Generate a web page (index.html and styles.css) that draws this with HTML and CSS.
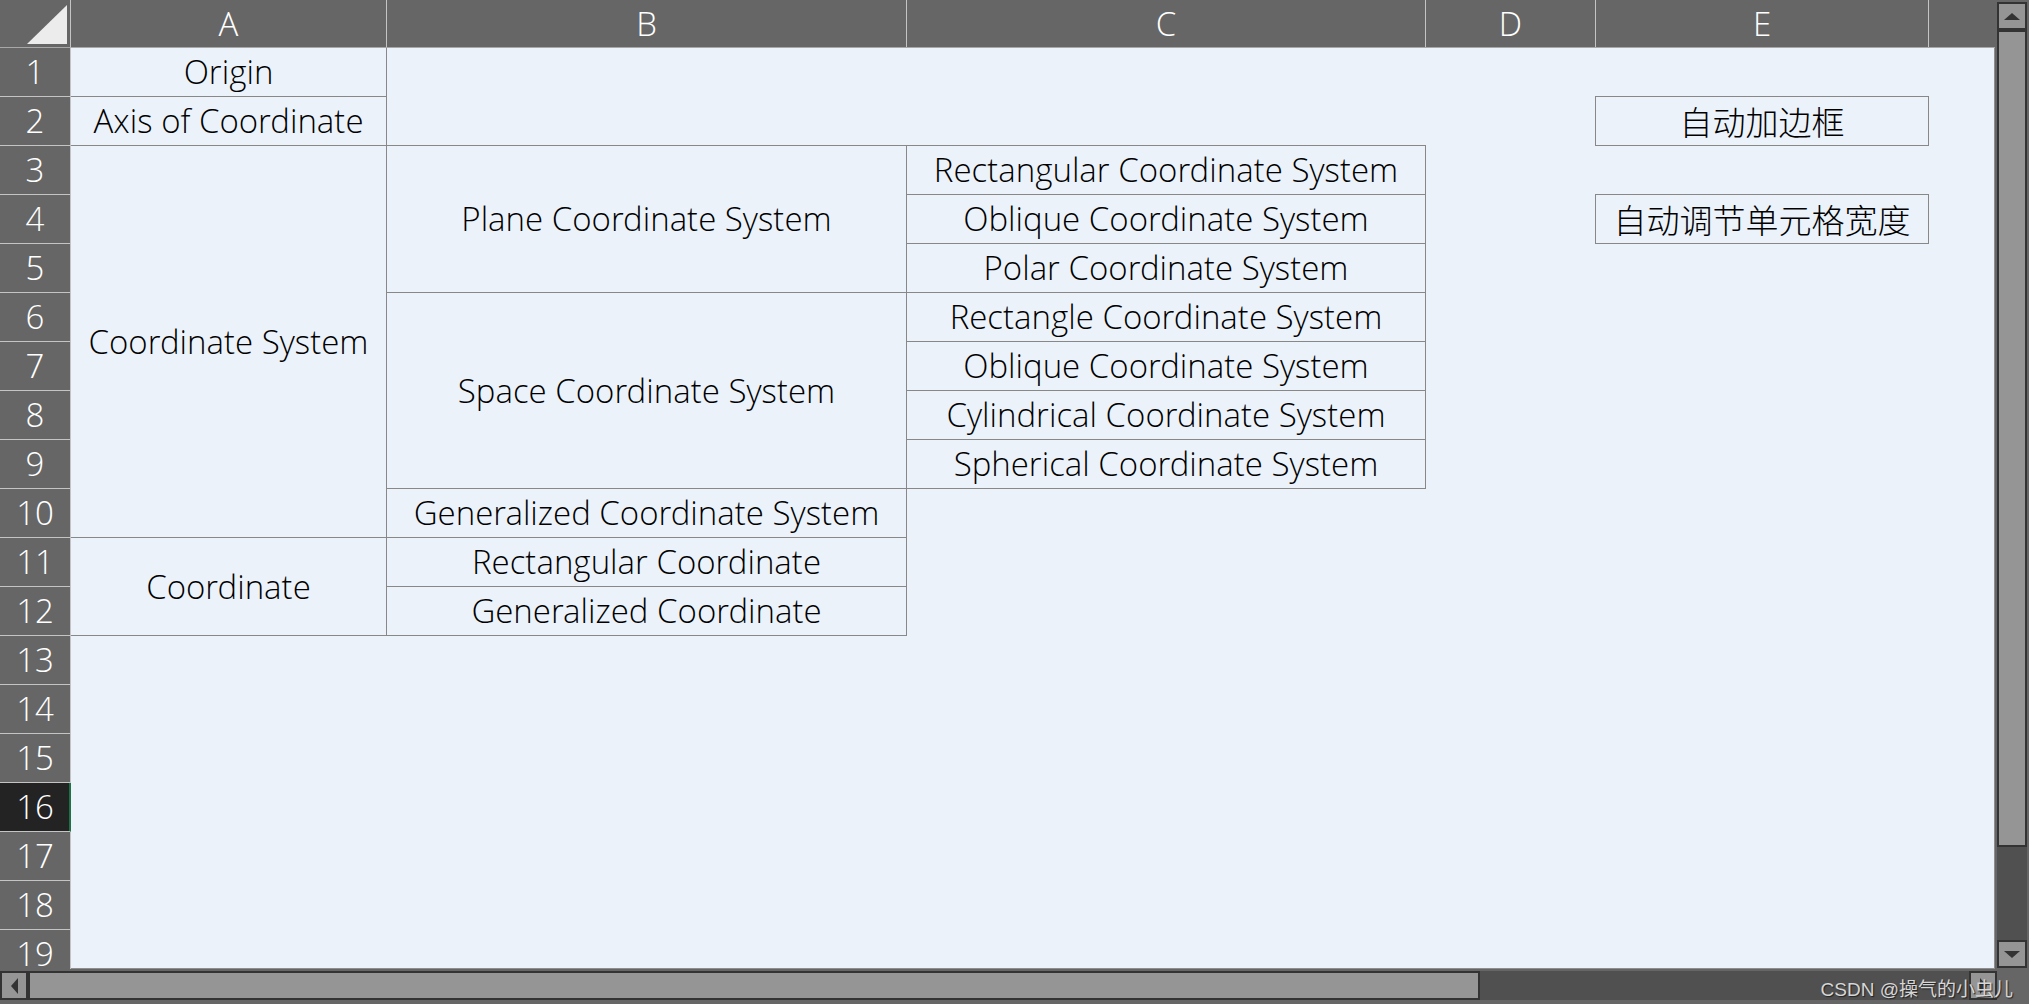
FILE: index.html
```html
<!DOCTYPE html>
<html lang="zh-CN">
<head>
<meta charset="utf-8">
<title>Coordinate System</title>
<link rel="stylesheet" href="styles.css">
</head>
<body>
<div class="window">
  <div class="sheet">
    <div class="corner">
      <svg class="corner-tri" width="71" height="48" viewBox="0 0 71 48"><polygon points="27,44 67,44 67,5" fill="#ececec"/></svg>
    </div>
    <div class="colheads">
      <div class="colhead">A</div>
      <div class="colhead">B</div>
      <div class="colhead">C</div>
      <div class="colhead">D</div>
      <div class="colhead">E</div>
      <div class="colhead last"></div>
    </div>
    <div class="rowheads">
      <div class="rowhead">1</div>
      <div class="rowhead">2</div>
      <div class="rowhead">3</div>
      <div class="rowhead">4</div>
      <div class="rowhead">5</div>
      <div class="rowhead">6</div>
      <div class="rowhead">7</div>
      <div class="rowhead">8</div>
      <div class="rowhead">9</div>
      <div class="rowhead">10</div>
      <div class="rowhead">11</div>
      <div class="rowhead">12</div>
      <div class="rowhead">13</div>
      <div class="rowhead">14</div>
      <div class="rowhead">15</div>
      <div class="rowhead sel">16</div>
      <div class="rowhead">17</div>
      <div class="rowhead">18</div>
      <div class="rowhead">19</div>
    </div>
    <div class="cells">
      <div class="cell bd col-a row-1">Origin</div>
      <div class="cell bd col-a row-2">Axis of Coordinate</div>
      <div class="cell bd col-a row-3 span-8">Coordinate System</div>
      <div class="cell bd col-b row-3 span-3">Plane Coordinate System</div>
      <div class="cell bd col-c row-3">Rectangular Coordinate System</div>
      <div class="cell bd col-c row-4">Oblique Coordinate System</div>
      <div class="cell bd col-c row-5">Polar Coordinate System</div>
      <div class="cell bd col-b row-6 span-4">Space Coordinate System</div>
      <div class="cell bd col-c row-6">Rectangle Coordinate System</div>
      <div class="cell bd col-c row-7">Oblique Coordinate System</div>
      <div class="cell bd col-c row-8">Cylindrical Coordinate System</div>
      <div class="cell bd col-c row-9">Spherical Coordinate System</div>
      <div class="cell bd col-b row-10">Generalized Coordinate System</div>
      <div class="cell bd col-a row-11 span-2">Coordinate</div>
      <div class="cell bd col-b row-11">Rectangular Coordinate</div>
      <div class="cell bd col-b row-12">Generalized Coordinate</div>
      <div class="cell bd cjk col-e row-2">自动加边框</div>
      <div class="cell bd cjk col-e row-4">自动调节单元格宽度</div>
    </div>
  </div>
  <div class="gap"></div>
  <div class="vscroll">
    <div class="sbtn"><span class="arrow-up"></span></div>
    <div class="vthumb"></div>
    <div class="vtrack"></div>
    <div class="sbtn"><span class="arrow-down"></span></div>
  </div>
  <div class="gap"></div>
  <div class="hscroll">
    <div class="hbar">
      <div class="sbtn"><span class="arrow-left"></span></div>
      <div class="hthumb"></div>
      <div class="htrack"></div>
      <div class="sbtn"><span class="arrow-right"></span></div>
    </div>
  </div>
  <div class="watermark">CSDN @操气的小虫儿</div>
</div>
</body>
</html>
```

FILE: styles.css
```css
html, body {
  margin: 0;
  padding: 0;
  width: 2029px;
  height: 1004px;
  overflow: hidden;
  background: #666666;
}

.window {
  position: relative;
  display: grid;
  grid-template-columns: 1995px 2px 30px 2px;
  grid-template-rows: 969px 35px;
  width: 2029px;
  height: 1004px;
  font-family: "Open Sans Light", "Open Sans", "Noto Sans CJK SC", sans-serif;
  font-weight: 300;
  font-size: 33px;
}

.sheet {
  display: grid;
  grid-template-columns: 71px 1fr;
  grid-template-rows: 48px 1fr;
  overflow: hidden;
  background: #666666;
}

.corner {
  border-right: 1px solid #c4c4c4;
  border-bottom: 1px solid #a8a8a8;
  box-sizing: border-box;
}

.corner-tri {
  display: block;
}

.colheads {
  display: grid;
  grid-template-columns: 316px 520px 519px 170px 333px 1fr;
  border-bottom: 1px solid #a8a8a8;
}

.colhead {
  display: flex;
  align-items: center;
  justify-content: center;
  color: #ffffff;
  border-right: 1px solid #c4c4c4;
}

.colhead.last {
  border-right: none;
}

.rowheads {
  display: flex;
  flex-direction: column;
  overflow: hidden;
}

.rowhead {
  flex: 0 0 49px;
  box-sizing: border-box;
  display: flex;
  align-items: center;
  justify-content: center;
  color: #ffffff;
  border-bottom: 1px solid #c4c4c4;
  border-right: 1px solid #c4c4c4;
  padding-bottom: 1px;
}

.rowhead.sel {
  background: #232323;
  border-right-color: #1e7145;
  box-shadow: inset -1px 0 0 #1e7145;
}

.cells {
  display: grid;
  grid-template-columns: 316px 520px 519px 170px 333px 1fr;
  grid-template-rows: repeat(19, 49px);
  background: #ebf2fa;
  border-right: 1px solid #8e8e8e;
  border-bottom: 1px solid #8e8e8e;
  overflow: hidden;
  color: #000000;
}

.cell {
  display: flex;
  align-items: center;
  justify-content: center;
  white-space: nowrap;
  box-sizing: border-box;
  padding-bottom: 1px;
}

.cell.bd {
  border-right: 1px solid #888888;
  border-bottom: 1px solid #888888;
  box-shadow: -1px 0 0 #888888, 0 -1px 0 #888888, -1px -1px 0 #888888;
}

.cell.cjk {
  font-family: "Noto Sans CJK SC", sans-serif;
  font-weight: 300;
  font-size: 33px;
}

.col-a { grid-column-start: 1; }
.col-b { grid-column-start: 2; }
.col-c { grid-column-start: 3; }
.col-d { grid-column-start: 4; }
.col-e { grid-column-start: 5; }

.row-1 { grid-row-start: 1; }
.row-2 { grid-row-start: 2; }
.row-3 { grid-row-start: 3; }
.row-4 { grid-row-start: 4; }
.row-5 { grid-row-start: 5; }
.row-6 { grid-row-start: 6; }
.row-7 { grid-row-start: 7; }
.row-8 { grid-row-start: 8; }
.row-9 { grid-row-start: 9; }
.row-10 { grid-row-start: 10; }
.row-11 { grid-row-start: 11; }
.row-12 { grid-row-start: 12; }

.span-2 { grid-row-end: span 2; }
.span-3 { grid-row-end: span 3; }
.span-4 { grid-row-end: span 4; }
.span-8 { grid-row-end: span 8; }

.gap {
  background: #666666;
}

/* scrollbars */
.vscroll {
  display: flex;
  flex-direction: column;
  margin-top: 2px;
  height: 966px;
  background: #505050;
}

.sbtn {
  flex: 0 0 auto;
  width: 26px;
  height: 24px;
  border: 2px solid #333333;
  background: #959595;
  display: flex;
  align-items: center;
  justify-content: center;
}

.vthumb {
  flex: 0 0 auto;
  height: 813px;
  border: 2px solid #333333;
  background: #959595;
}

.vtrack {
  flex: 1 1 auto;
}

.arrow-up {
  width: 0;
  height: 0;
  border-left: 8px solid transparent;
  border-right: 8px solid transparent;
  border-bottom: 7px solid #333333;
}

.arrow-down {
  width: 0;
  height: 0;
  border-left: 8px solid transparent;
  border-right: 8px solid transparent;
  border-top: 7px solid #333333;
}

.arrow-left {
  width: 0;
  height: 0;
  border-top: 8px solid transparent;
  border-bottom: 8px solid transparent;
  border-right: 7px solid #333333;
}

.arrow-right {
  width: 0;
  height: 0;
  border-top: 8px solid transparent;
  border-bottom: 8px solid transparent;
  border-left: 7px solid #333333;
}

.hscroll {
  grid-column: 1 / -1;
  grid-row: 2;
  padding: 2px 32px 4px 0;
}

.hbar {
  display: flex;
  height: 29px;
  background: #505050;
}

.hbar .sbtn {
  width: 24px;
  height: 25px;
}

.hthumb {
  flex: 0 0 auto;
  width: 1448px;
  border: 2px solid #333333;
  background: #959595;
}

.htrack {
  flex: 1 1 auto;
}

.watermark {
  position: absolute;
  right: 16px;
  bottom: 3px;
  font-family: "Liberation Sans", "Noto Sans CJK SC", sans-serif;
  font-weight: 400;
  font-size: 19px;
  color: #d6d6d6;
  text-shadow: 1px 1px 1px #222222;
  white-space: nowrap;
}
```
